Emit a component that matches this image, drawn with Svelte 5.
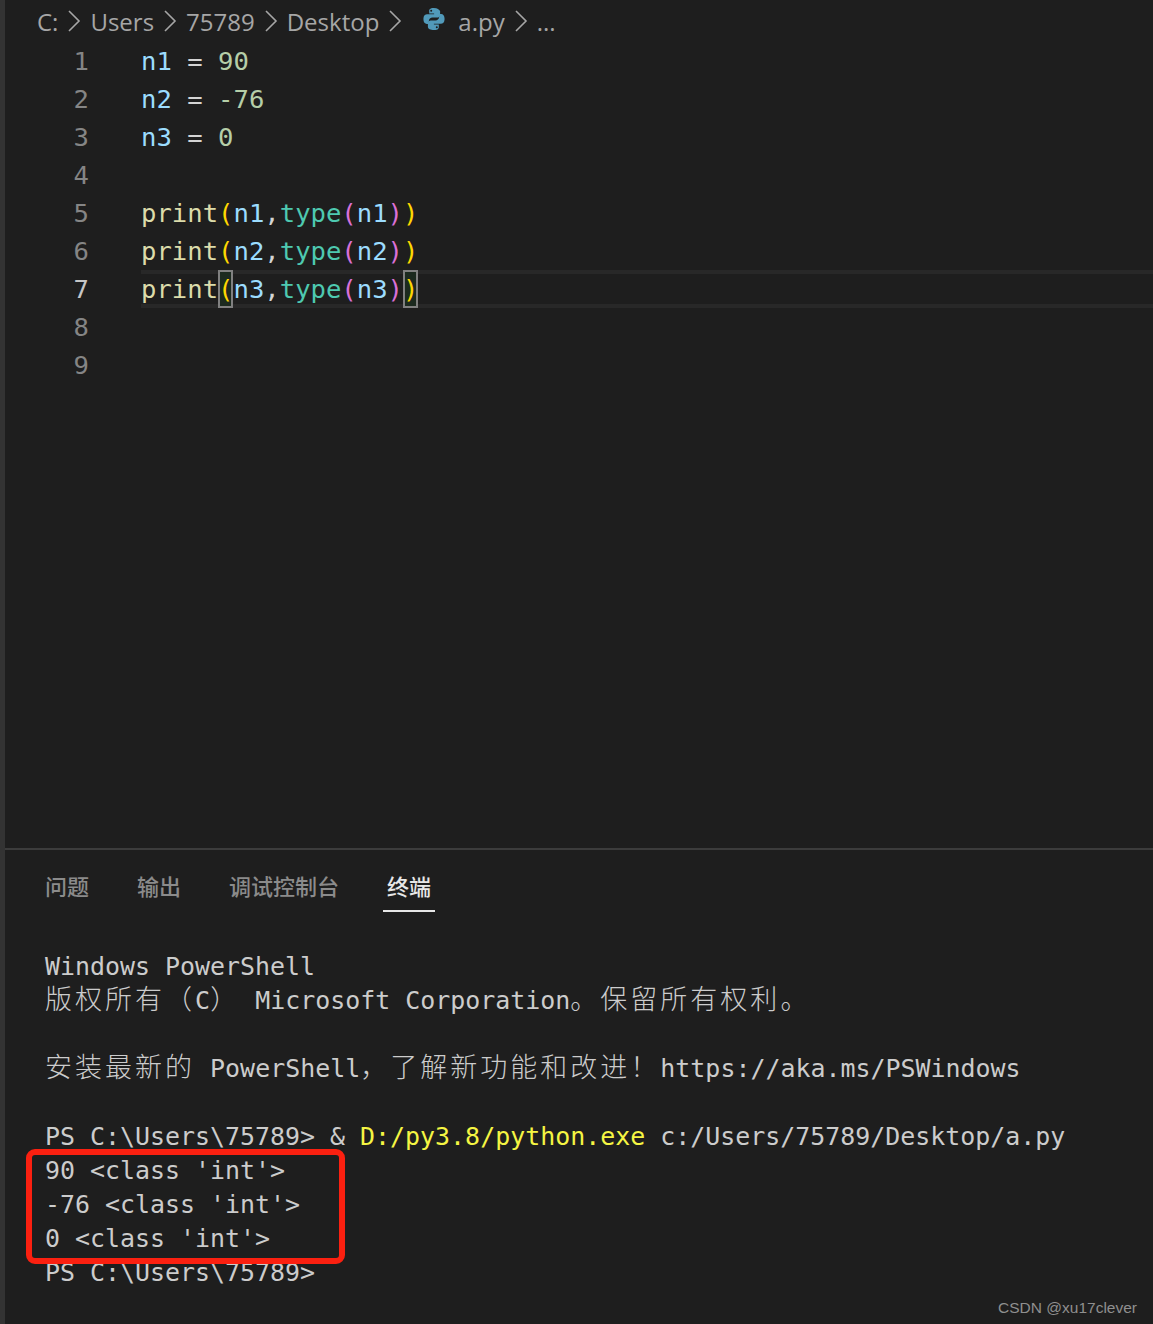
<script>
  // token helpers for the editor: [text, class]
  const v = (t) => [t, "var"];
  const o = (t) => [t, "op"];
  const n = (t) => [t, "num"];
  const f = (t) => [t, "fn"];
  const c = (t) => [t, "cls"];
  const g = (t) => [t, "gold"];
  const p = (t) => [t, "purple"];
  const m = (t) => [t, "gold match"];

  const printLine = (name, open = g, close = g) => [
    f("print"), open("("), v(name), o(","), c("type"), p("("), v(name), p(")"), close(")")
  ];

  const lines = [
    [v("n1"), o(" = "), n("90")],
    [v("n2"), o(" = "), n("-76")],
    [v("n3"), o(" = "), n("0")],
    [],
    printLine("n1"),
    printLine("n2"),
    printLine("n3", m, m),
    [],
    []
  ];
  const activeLine = 6;

  const crumbs = ["C:", "Users", "75789", "Desktop"];
  const tabs = ["问题", "输出", "调试控制台", "终端"];
</script>

<div class="window">
  <div class="strip"></div>
  <div class="main">
    <div class="editor">
      <div class="breadcrumbs">
        {#each crumbs as crumb}
          <span class="crumb">{crumb}</span>
          <svg class="chevron" viewBox="0 0 14 24" width="14" height="24"><path d="M2 2l10 10-10 10" fill="none" stroke="#a6a6a6" stroke-width="1.6" /></svg>
        {/each}
        <svg class="py" viewBox="0 0 24 24" width="24" height="24">
          <path fill="#519aba" d="M11.800 1C7.600 1 7.200 2.800 7.200 4.100V6.400h4.900v.8H5.200C3.200 7.200 1.400 8.600 1.400 12s1.600 4.900 3.400 4.900h2v-2.600c0-2 1.700-3.700 3.700-3.700h4.800c1.500 0 2.800-1.300 2.800-2.900V4.100C17.100 2.400 15.600 1 11.800 1zM9.200 2.800a1 1 0 1 1 0 2 1 1 0 0 1 0-2z" />
          <path fill="#519aba" d="M12.200 23c4.200 0 4.600-1.800 4.600-3.100v-2.300h-4.900v-.8h6.900c2 0 3.800-1.400 3.800-4.800s-1.600-4.900-3.400-4.900h-2v2.600c0 2-1.700 3.700-3.700 3.700H8.700c-1.500 0-2.800 1.300-2.800 2.900v3.600C5.900 21.600 8.400 23 12.200 23zm2.600-1.800a1 1 0 1 1 0-2 1 1 0 0 1 0 2z" />
        </svg>
        <span class="crumb file">a.py</span>
        <svg class="chevron" viewBox="0 0 14 24" width="14" height="24"><path d="M2 2l10 10-10 10" fill="none" stroke="#a6a6a6" stroke-width="1.6" /></svg>
        <span class="crumb">...</span>
      </div>
      <div class="code">
        {#each lines as line, i}
          <div class="row">
            <span class="num-col" class:active={i === activeLine}>{i + 1}</span>
            <div class="text" class:current={i === activeLine}>
              {#each line as [text, cls]}<span class={cls}>{text}</span>{/each}
            </div>
          </div>
        {/each}
      </div>
    </div>

    <div class="panel">
      <div class="tabs">
        {#each tabs as tab, i}
          <div class="tab" class:selected={i === tabs.length - 1}>{tab}</div>
        {/each}
      </div>
      <div class="terminal">
        <div class="tl">Windows PowerShell</div>
        <div class="tl"><span class="cjk">版权所有（</span>C<span class="cjk">）</span> Microsoft Corporation<span class="cjk">。保留所有权利。</span></div>
        <div class="tl"></div>
        <div class="tl"><span class="cjk">安装最新的</span> PowerShell<span class="cjk">，了解新功能和改进！</span>https://aka.ms/PSWindows</div>
        <div class="tl"></div>
        <div class="tl">PS C:\Users\75789&gt; &amp; <span class="yellow">D:/py3.8/python.exe</span> c:/Users/75789/Desktop/a.py</div>
        <div class="output">
          <div class="tl">90 &lt;class 'int'&gt;</div>
          <div class="tl">-76 &lt;class 'int'&gt;</div>
          <div class="tl">0 &lt;class 'int'&gt;</div>
          <div class="mark"></div>
        </div>
        <div class="tl">PS C:\Users\75789&gt;</div>
      </div>
    </div>
  </div>
  <div class="watermark">CSDN @xu17clever</div>
</div>

<style>
  :global(body) {
    background: #1e1e1e;
  }

  .window {
    position: relative;
    display: flex;
    height: 1324px;
    background: #1e1e1e;
    overflow: hidden;
  }

  .strip {
    width: 5px;
    background: #333333;
    flex-shrink: 0;
  }

  .main {
    flex: 1;
    min-width: 0;
    display: flex;
    flex-direction: column;
  }

  .editor {
    height: 848px;
    flex-shrink: 0;
  }

  .breadcrumbs {
    height: 42px;
    display: flex;
    align-items: center;
    padding-left: 32px;
    color: #a6a6a6;
    font-family: "Open Sans", "Noto Sans", sans-serif;
    font-size: 24px;
  }

  .chevron {
    margin: 0 9px;
    flex-shrink: 0;
  }

  .py {
    margin: 0 12px 4px 11px;
  }

  .code {
    font-family: "DejaVu Sans Mono", monospace;
    font-size: 25.6px;
    line-height: 38px;
    font-variant-ligatures: none;
  }

  .row {
    display: flex;
    height: 38px;
  }

  .num-col {
    width: 84px;
    text-align: right;
    color: #858585;
    margin-right: 52px;
    flex-shrink: 0;
  }

  .num-col.active {
    color: #c6c6c6;
  }

  .text {
    flex: 1;
    white-space: pre;
    height: 38px;
  }

  .text.current {
    border-top: 4px solid #282828;
    border-bottom: 4px solid #282828;
    box-sizing: border-box;
    line-height: 30px;
  }

  .var { color: #9cdcfe; }
  .op { color: #d4d4d4; }
  .num { color: #b5cea8; }
  .fn { color: #dcdcaa; }
  .cls { color: #4ec9b0; }
  .gold { color: #ffd700; }
  .purple { color: #da70d6; }

  .match {
    display: inline-block;
    height: 38px;
    margin-top: -4px;
    line-height: 38px;
    box-sizing: border-box;
    background: #1c2a1f;
    box-shadow: inset 0 0 0 2px #808080;
    vertical-align: top;
  }

  .panel {
    flex: 1;
    border-top: 2px solid #3c3c3c;
  }

  .tabs {
    display: flex;
    gap: 40px;
    height: 62px;
    padding-left: 36px;
    box-sizing: border-box;
    font-family: "Noto Sans CJK SC", sans-serif;
    font-size: 22px;
    font-weight: 500;
    color: #8b8b8b;
  }

  .tab {
    padding: 0 4px;
    line-height: 70px;
    height: 62px;
    box-sizing: border-box;
  }

  .tab.selected {
    color: #e7e7e7;
    border-bottom: 2px solid #e7e7e7;
  }

  .terminal {
    padding: 38px 0 0 40px;
    font-family: "DejaVu Sans Mono", monospace;
    font-size: 24.93px;
    line-height: 34px;
    color: #cccccc;
    font-variant-ligatures: none;
  }

  .tl {
    height: 34px;
    white-space: pre;
  }

  .cjk {
    font-family: "Noto Sans CJK SC", sans-serif;
    font-size: 27px;
    font-weight: 300;
    line-height: 0;
    letter-spacing: 3.020px;
  }

  .yellow {
    color: #f5f543;
  }

  .output {
    position: relative;
  }

  .mark {
    position: absolute;
    left: -19px;
    top: -5px;
    width: 319px;
    height: 115px;
    box-sizing: border-box;
    border: 6px solid #fb2010;
    border-radius: 9px;
  }

  .watermark {
    position: absolute;
    right: 16px;
    bottom: 7px;
    font-family: "Liberation Sans", Arial, sans-serif;
    font-size: 15.500px;
    color: #8f8f8f;
  }
</style>
